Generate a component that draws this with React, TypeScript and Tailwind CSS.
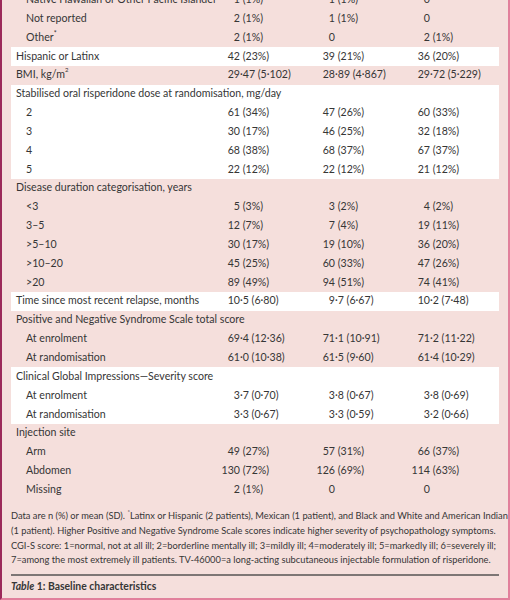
import React from "react";

type Row = { label: React.ReactNode; vals?: string[]; indent?: boolean };
type Group = { white: boolean; rows: Row[] };

const groups: Group[] = [
  {
    white: false,
    rows: [
      { label: "Native Hawaiian or Other Pacific Islander", vals: ["1 (1%)", "1 (1%)", "0"], indent: true },
      { label: "Not reported", vals: ["2 (1%)", "1 (1%)", "0"], indent: true },
      { label: <>Other<span className="text-[7px] align-top leading-none">*</span></>, vals: ["2 (1%)", "0", "2 (1%)"], indent: true },
    ],
  },
  { white: true, rows: [{ label: "Hispanic or Latinx", vals: ["42 (23%)", "39 (21%)", "36 (20%)"] }] },
  {
    white: false,
    rows: [
      {
        label: <>BMI, kg/m<span className="text-[6px] align-top leading-none">2</span></>,
        vals: ["29·47 (5·102)", "28·89 (4·867)", "29·72 (5·229)"],
      },
    ],
  },
  {
    white: true,
    rows: [
      { label: "Stabilised oral risperidone dose at randomisation, mg/day" },
      { label: "2", vals: ["61 (34%)", "47 (26%)", "60 (33%)"], indent: true },
      { label: "3", vals: ["30 (17%)", "46 (25%)", "32 (18%)"], indent: true },
      { label: "4", vals: ["68 (38%)", "68 (37%)", "67 (37%)"], indent: true },
      { label: "5", vals: ["22 (12%)", "22 (12%)", "21 (12%)"], indent: true },
    ],
  },
  {
    white: false,
    rows: [
      { label: "Disease duration categorisation, years" },
      { label: "<3", vals: ["5 (3%)", "3 (2%)", "4 (2%)"], indent: true },
      { label: "3–5", vals: ["12 (7%)", "7 (4%)", "19 (11%)"], indent: true },
      { label: ">5–10", vals: ["30 (17%)", "19 (10%)", "36 (20%)"], indent: true },
      { label: ">10–20", vals: ["45 (25%)", "60 (33%)", "47 (26%)"], indent: true },
      { label: ">20", vals: ["89 (49%)", "94 (51%)", "74 (41%)"], indent: true },
    ],
  },
  {
    white: true,
    rows: [{ label: "Time since most recent relapse, months", vals: ["10·5 (6·80)", "9·7 (6·67)", "10·2 (7·48)"] }],
  },
  {
    white: false,
    rows: [
      { label: "Positive and Negative Syndrome Scale total score" },
      { label: "At enrolment", vals: ["69·4 (12·36)", "71·1 (10·91)", "71·2 (11·22)"], indent: true },
      { label: "At randomisation", vals: ["61·0 (10·38)", "61·5 (9·60)", "61·4 (10·29)"], indent: true },
    ],
  },
  {
    white: true,
    rows: [
      { label: "Clinical Global Impressions—Severity score" },
      { label: "At enrolment", vals: ["3·7 (0·70)", "3·8 (0·67)", "3·8 (0·69)"], indent: true },
      { label: "At randomisation", vals: ["3·3 (0·67)", "3·3 (0·59)", "3·2 (0·66)"], indent: true },
    ],
  },
  {
    white: false,
    rows: [
      { label: "Injection site" },
      { label: "Arm", vals: ["49 (27%)", "57 (31%)", "66 (37%)"], indent: true },
      { label: "Abdomen", vals: ["130 (72%)", "126 (69%)", "114 (63%)"], indent: true },
      { label: "Missing", vals: ["2 (1%)", "0", "0"], indent: true },
    ],
  },
];

function Val({ v }: { v: string }) {
  const m = v.match(/^(\d+)(.*)$/);
  const a = m ? m[1] : v;
  const b = m ? m[2] : "";
  return (
    <div className="flex w-[95px] shrink-0 whitespace-pre">
      <span className="w-[29px] text-right shrink-0">{a}</span>
      <span>{b}</span>
    </div>
  );
}

export default function App() {
  return (
    <div
      className="w-[510px] h-[600px] overflow-hidden bg-[#f5dfdc] border-l-2 border-l-[#9c2a5a] border-r-2 border-r-[#e2809c] border-b-2 border-b-[#e2809c] text-[#363636] px-[9px]"
      style={{ fontFamily: "Lato, 'Noto Sans', sans-serif" }}
    >
      <div className="-mt-[9.5px] flex flex-col text-[10.6px]">
        {groups.map((g, gi) => (
          <div key={gi} className={g.white ? "bg-white" : ""}>
            {g.rows.map((r, ri) => (
              <div key={ri} className="h-[18.85px] flex items-center">
                <div className={`w-[200px] shrink-0 whitespace-nowrap ${r.indent ? "pl-[15px]" : "pl-[5px]"}`}>
                  {r.label}
                </div>
                {r.vals && r.vals.map((v, vi) => <Val key={vi} v={v} />)}
              </div>
            ))}
          </div>
        ))}
      </div>
      <div className="mt-[10px] text-[9.3px] leading-[14.7px] whitespace-nowrap">
        <div>
          Data are n (%) or mean (SD). <span className="text-[6px] align-top leading-none">*</span>Latinx or Hispanic (2 patients), Mexican (1 patient), and Black and White and American Indian
        </div>
        <div>(1 patient). Higher Positive and Negative Syndrome Scale scores indicate higher severity of psychopathology symptoms.</div>
        <div>CGI-S score: 1=normal, not at all ill; 2=borderline mentally ill; 3=mildly ill; 4=moderately ill; 5=markedly ill; 6=severely ill;</div>
        <div>7=among the most extremely ill patients. TV-46000=a long-acting subcutaneous injectable formulation of risperidone.</div>
      </div>
      <div className="mt-[6px] h-[2px] bg-[#7d7675]" />
      <div className="mt-[3px] text-[10.4px] font-bold">
        <span className="italic">Table</span> 1: Baseline characteristics
      </div>
    </div>
  );
}
